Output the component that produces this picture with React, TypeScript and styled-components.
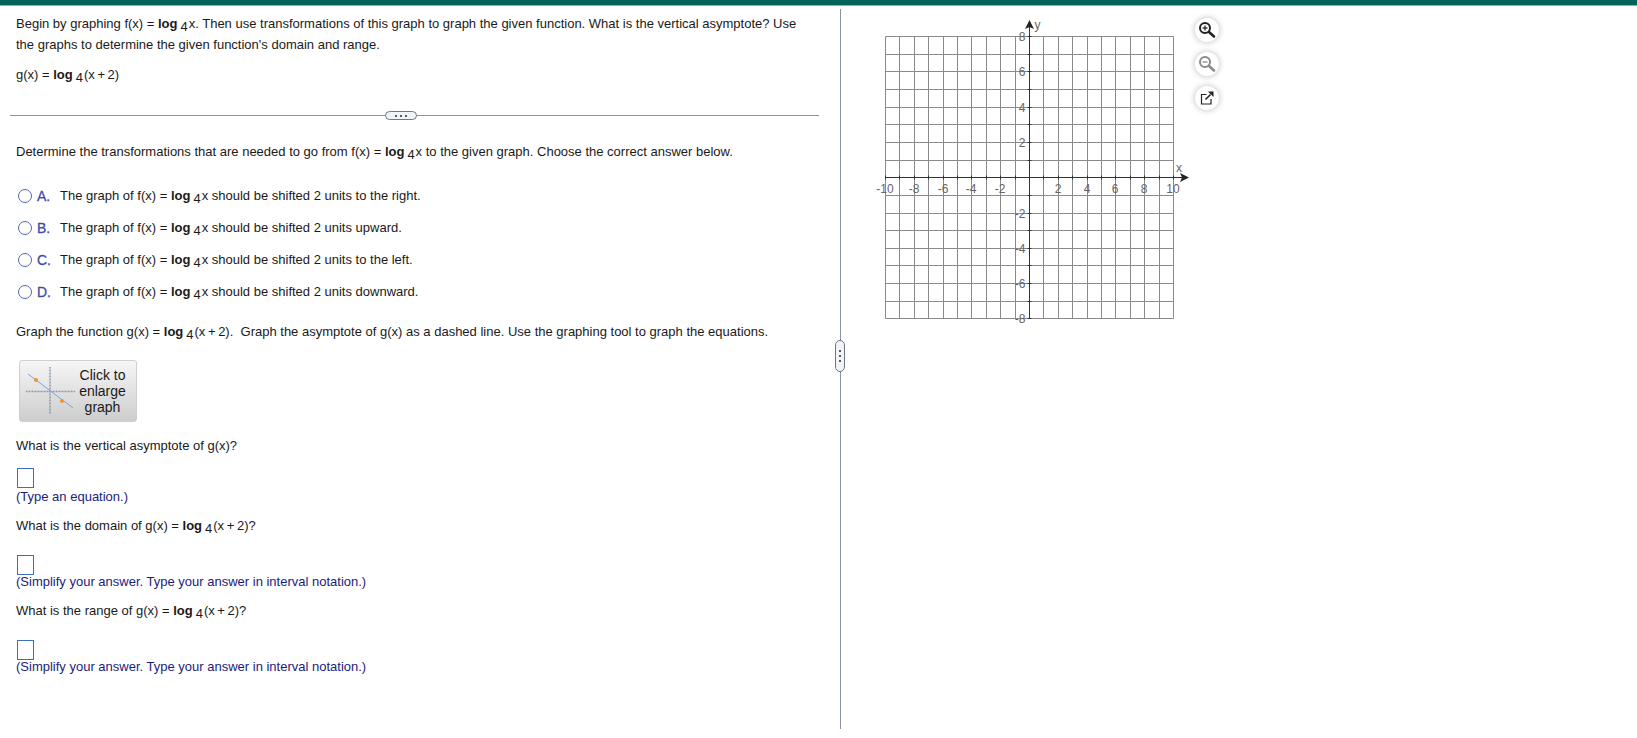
import React from "react";
import styled, { createGlobalStyle } from "styled-components";

const Global = createGlobalStyle`
  html, body { margin: 0; padding: 0; background: #fff; }
  body { font-family: "Liberation Sans", Arial, sans-serif; font-size: 13px; color: #1a1a1a; overflow: hidden; }
`;

const Page = styled.div`
  width: 1637px;
  height: 738px;
  display: flex;
  flex-direction: column;
`;
const TopBar = styled.div`
  height: 5px;
  background: #00645a;
  border-bottom: 1px solid #7fb8b2;
  flex: none;
`;
const Body = styled.div`
  display: flex;
  height: 720px;
  margin-top: 3px;
`;
const LeftPane = styled.div`
  position: relative;
  width: 841px;
  box-sizing: border-box;
  border-right: 1px solid #8b93a1;
  padding: 0 0 0 16px;
  flex: none;
`;
const RightPane = styled.div`
  display: flex;
  flex: 1;
  align-items: flex-start;
  padding-left: 34px;
`;
const Line = styled.div<{ $top: number; $navy?: boolean }>`
  margin-top: ${(p) => p.$top}px;
  height: 21px;
  line-height: 21px;
  white-space: nowrap;
  color: ${(p) => (p.$navy ? "#1c1c7a" : "#1a1a1a")};
`;
const Bold = styled.b`
  font-weight: 700;
`;
const Sub = styled.span`
  position: relative;
  top: 3px;
  font-size: 13px;
  margin: 0 1px 0 3px;
`;
const Rule = styled.div`
  position: relative;
  height: 1px;
  background: #8b93a1;
  margin: 30px 21px 0 -6px;
`;
const HHandle = styled.div`
  position: absolute;
  left: 375px;
  top: -4px;
  width: 32px;
  height: 9px;
  box-sizing: border-box;
  background: #f1f3f7;
  border: 1px solid #6d7787;
  border-radius: 5px;
  display: flex;
  align-items: center;
  justify-content: center;
  gap: 3px;
`;
const VHandle = styled.div`
  position: absolute;
  right: -5px;
  top: 331px;
  width: 10px;
  height: 32px;
  box-sizing: border-box;
  background: #f1f3f7;
  border: 1px solid #6d7787;
  border-radius: 5px;
  display: flex;
  flex-direction: column;
  align-items: center;
  justify-content: center;
  gap: 3px;
`;
const Dot = styled.span`
  width: 2px;
  height: 2px;
  background: #555c68;
`;
const Option = styled.div<{ $top: number }>`
  display: flex;
  align-items: center;
  height: 21px;
  margin-top: ${(p) => p.$top}px;
  margin-left: 2px;
  white-space: nowrap;
`;
const Radio = styled.span`
  width: 14px;
  height: 14px;
  box-sizing: border-box;
  border: 1.5px solid #5469b8;
  border-radius: 50%;
  flex: none;
`;
const Letter = styled.span`
  width: 23px;
  margin-left: 5px;
  font-size: 14px;
  color: #3f4da8;
  -webkit-text-stroke: 0.3px #3f4da8;
  flex: none;
`;
const EnlargeButton = styled.button`
  display: flex;
  align-items: center;
  width: 118px;
  height: 62px;
  margin: 18px 0 0 3px;
  padding: 0 0 0 6px;
  box-sizing: border-box;
  border: 1px solid #cfcfcf;
  border-radius: 3px;
  background: linear-gradient(#f6f6f6, #cdcdcd);
  font: 14px/16px "Liberation Sans", Arial, sans-serif;
  color: #1a1a1a;
`;
const ButtonLabel = styled.span`
  flex: 1;
  text-align: center;
  padding-right: 7px;
`;
const AnswerBox = styled.div<{ $top: number }>`
  width: 17px;
  height: 20px;
  box-sizing: border-box;
  border: 1px solid #3f6cc6;
  margin: ${(p) => p.$top}px 0 0 1px;
  background: #fff;
`;
const IconColumn = styled.div`
  display: flex;
  flex-direction: column;
  gap: 10px;
  margin: 9px 0 0 4px;
`;
const IconButton = styled.div`
  width: 24px;
  height: 24px;
  border-radius: 50%;
  background: #fff;
  box-shadow: 0 0 6px rgba(0, 0, 0, 0.28);
  display: flex;
  align-items: center;
  justify-content: center;
`;
const GraphLabel = styled.text`
  font: 12px "Liberation Sans", Arial, sans-serif;
  fill: #666;
`;
const GraphCanvas = styled.svg`
  flex: none;
`;
const Thumb = styled.svg`
  flex: none;
`;

const Log = ({ arg }: { arg: string }) => (
  <>
    <Bold>log</Bold>
    <Sub>4</Sub>
    {arg}
  </>
);

const X0 = 10.5;
const Y0 = 27.5;
const xAt = (v: number) => Math.round(X0 + (v + 10) * 14.4 - 0.5) + 0.5;
const yAt = (v: number) => Math.round(Y0 + (8 - v) * 17.65 - 0.5) + 0.5;
const range = (a: number, b: number) => Array.from({ length: b - a + 1 }, (_, i) => a + i);

const Graph = () => (
  <GraphCanvas width="316" height="325">
    {range(-10, 10).map((v) => (
      <line key={`v${v}`} x1={xAt(v)} x2={xAt(v)} y1={yAt(8)} y2={yAt(-8)} stroke="#8a8a8a" />
    ))}
    {range(-8, 8).map((v) => (
      <line key={`h${v}`} x1={xAt(-10)} x2={xAt(10)} y1={yAt(v)} y2={yAt(v)} stroke="#8a8a8a" />
    ))}
    <line x1={xAt(-10)} x2={312} y1={yAt(0)} y2={yAt(0)} stroke="#333" />
    <line x1={xAt(0)} x2={xAt(0)} y1={14} y2={yAt(-8)} stroke="#333" />
    <path d={`M${xAt(0)} 11 l4.5 9 l-4.5 -2 l-4.5 2 z`} fill="#222" />
    <path d={`M314 ${yAt(0)} l-9 -4.5 l2 4.5 l-2 4.5 z`} fill="#222" />
    {range(-10, 10).map((v) => (
      <line key={`tx${v}`} x1={xAt(v)} x2={xAt(v)} y1={yAt(0) - 2} y2={yAt(0) + 2} stroke="#333" />
    ))}
    {range(-8, 8).map((v) => (
      <line key={`ty${v}`} x1={xAt(0) - 2} x2={xAt(0) + 2} y1={yAt(v)} y2={yAt(v)} stroke="#333" />
    ))}
    {[-10, -8, -6, -4, -2, 2, 4, 6, 8, 10].map((v) => (
      <GraphLabel key={`lx${v}`} x={xAt(v) - 0.5} y={yAt(0) + 15} textAnchor="middle">
        {v}
      </GraphLabel>
    ))}
    {[8, 6, 4, 2, -2, -4, -6, -8].map((v) => (
      <GraphLabel key={`ly${v}`} x={xAt(0) - 4} y={yAt(v) + 4} textAnchor="end">
        {v}
      </GraphLabel>
    ))}
    <GraphLabel x={xAt(0) + 5} y={20}>y</GraphLabel>
    <GraphLabel x={301} y={yAt(0) - 6}>x</GraphLabel>
  </GraphCanvas>
);

const GlassIcon = ({ kind, color }: { kind: "in" | "out"; color: string }) => (
  <svg width="18" height="18" viewBox="0 0 18 18" fill="none" stroke={color}>
    <circle cx="7" cy="7" r="5" strokeWidth="2" />
    <path d="M11 11 L16 15.5" strokeWidth="2.6" strokeLinecap="round" />
    <path d="M4.5 7 H9.5" strokeWidth="1.3" />
    {kind === "in" && <path d="M7 4.5 V9.5" strokeWidth="1.3" />}
  </svg>
);

const PopIcon = () => (
  <svg width="18" height="18" viewBox="0 0 18 18" fill="none" stroke="#222">
    <path d="M8.5 5.5 H3.5 V15 H13 V10" strokeWidth="1.2" />
    <path d="M7.5 10.5 L12.5 5.5" strokeWidth="1.6" />
    <path d="M10 2.5 H15.5 V8 Z" fill="#222" stroke="none" />
  </svg>
);

const ThumbIcon = () => (
  <Thumb width="50" height="50" viewBox="0 0 50 50">
    <line x1="24" y1="1" x2="24" y2="48" stroke="#8b98a8" strokeWidth="1.5" strokeDasharray="1 0.5" />
    <line x1="0" y1="25.5" x2="49" y2="25.5" stroke="#8b98a8" strokeWidth="1.5" strokeDasharray="1 0.5" />
    <line x1="2" y1="8" x2="47" y2="42" stroke="#7da4dc" strokeWidth="1" />
    <circle cx="10" cy="14" r="2" fill="#f2922c" />
    <circle cx="36" cy="35" r="2" fill="#f2922c" />
  </Thumb>
);

const options: [string, string][] = [
  ["A.", "shifted 2 units to the right."],
  ["B.", "shifted 2 units upward."],
  ["C.", "shifted 2 units to the left."],
  ["D.", "shifted 2 units downward."],
];

export default function App() {
  return (
    <Page>
      <Global />
      <TopBar />
      <Body>
        <LeftPane>
          <Line $top={4}>
            Begin by graphing f(x) = <Log arg="x" />. Then use transformations of this graph to graph the given function. What is the vertical asymptote? Use
          </Line>
          <Line $top={0}>the graphs to determine the given function's domain and range.</Line>
          <Line $top={9}>
            g(x) = <Log arg={"(x\u2009+\u20092)"} />
          </Line>
          <Rule>
            <HHandle>
              <Dot />
              <Dot />
              <Dot />
            </HHandle>
          </Rule>
          <Line $top={25}>
            Determine the transformations that are needed to go from f(x) = <Log arg="x" /> to the given graph. Choose the correct answer below.
          </Line>
          {options.map(([letter, text], i) => (
            <Option key={letter} $top={i === 0 ? 23 : 11}>
              <Radio />
              <Letter>{letter}</Letter>
              <span>
                The graph of f(x) = <Log arg="x" /> should be {text}
              </span>
            </Option>
          ))}
          <Line $top={19}>
            Graph the function g(x) = <Log arg={"(x\u2009+\u20092)."} />&nbsp; Graph the asymptote of g(x) as a dashed line. Use the graphing tool to graph the equations.
          </Line>
          <EnlargeButton>
            <ThumbIcon />
            <ButtonLabel>Click to enlarge graph</ButtonLabel>
          </EnlargeButton>
          <Line $top={13}>What is the vertical asymptote of g(x)?</Line>
          <AnswerBox $top={12} />
          <Line $top={-2} $navy>(Type an equation.)</Line>
          <Line $top={8}>
            What is the domain of g(x) = <Log arg={"(x\u2009+\u20092)?"} />
          </Line>
          <AnswerBox $top={19} />
          <Line $top={-4} $navy>(Simplify your answer. Type your answer in interval notation.)</Line>
          <Line $top={8}>
            What is the range of g(x) = <Log arg={"(x\u2009+\u20092)?"} />
          </Line>
          <AnswerBox $top={19} />
          <Line $top={-4} $navy>(Simplify your answer. Type your answer in interval notation.)</Line>
          <VHandle>
            <Dot />
            <Dot />
            <Dot />
          </VHandle>
        </LeftPane>
        <RightPane>
          <Graph />
          <IconColumn>
            <IconButton>
              <GlassIcon kind="in" color="#222" />
            </IconButton>
            <IconButton>
              <GlassIcon kind="out" color="#8a8a8a" />
            </IconButton>
            <IconButton>
              <PopIcon />
            </IconButton>
          </IconColumn>
        </RightPane>
      </Body>
    </Page>
  );
}
